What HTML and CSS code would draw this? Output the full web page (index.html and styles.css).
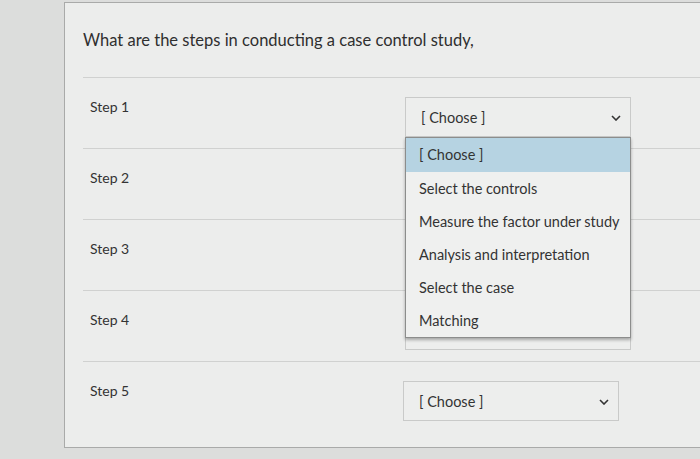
FILE: index.html
```html
<!DOCTYPE html>
<html lang="en">
<head>
  <meta charset="UTF-8">
  <title>Quiz Question</title>
  <link rel="stylesheet" href="styles.css">
</head>
<body>
  <!-- Question card -->
  <div class="question">
    <p class="question-text">What are the steps in conducting a case control study,</p>

    <div class="answers">
      <div class="answer-row">
        <span class="step-label">Step 1</span>
        <div class="select-wrap">
          <div class="select-box">
            <span>[ Choose ]</span>
            <svg class="chevron" viewBox="0 0 10 6" width="10" height="6"><path d="M1 1l4 4 4-4" fill="none" stroke="#333" stroke-width="1.6"/></svg>
          </div>
          <!-- Open dropdown list -->
          <ul class="dropdown">
            <li class="active">[ Choose ]</li>
            <li>Select the controls</li>
            <li>Measure the factor under study</li>
            <li>Analysis and interpretation</li>
            <li>Select the case</li>
            <li>Matching</li>
          </ul>
        </div>
      </div>
      <!-- Steps 2-4: selects sit under the open list -->
      <div class="answer-row">
        <span class="step-label">Step 2</span>
        <div class="select-wrap">
          <div class="select-box"></div>
        </div>
      </div>
      <div class="answer-row">
        <span class="step-label">Step 3</span>
        <div class="select-wrap">
          <div class="select-box"></div>
        </div>
      </div>
      <div class="answer-row">
        <span class="step-label">Step 4</span>
        <div class="select-wrap">
          <div class="select-box"></div>
        </div>
      </div>
      <div class="answer-row last">
        <span class="step-label">Step 5</span>
        <div class="select-wrap">
          <div class="select-box short">
            <span>[ Choose ]</span>
            <svg class="chevron" viewBox="0 0 10 6" width="10" height="6"><path d="M1 1l4 4 4-4" fill="none" stroke="#333" stroke-width="1.6"/></svg>
          </div>
        </div>
      </div>
    </div>
  </div>
</body>
</html>
```

FILE: styles.css
```css
/* Base Styling */
* {
  margin: 0;
  padding: 0;
  box-sizing: border-box;
}

body {
  font-family: Lato, "Open Sans", Arial, sans-serif;
  background-color: #dcdddc;
  color: #333;
  width: 700px;
  height: 459px;
  overflow: hidden;
}

/* Question Card */
.question {
  margin: 2px 0 0 64px;
  width: 660px;
  height: 446px;
  background-color: #ecedec;
  border: 1px solid #a9aaa9;
  padding: 0 0 0 18px;
}

.question-text {
  font-size: 16.5px;
  color: #2f2f2f;
  padding: 27px 0 0 0;
  height: 74px;
}

/* Answer Rows */
.answers {
  display: flex;
  flex-direction: column;
}

.answer-row {
  display: flex;
  border-top: 1px solid #d0d1d0;
  height: 71px;
}

.answer-row.last {
  height: 84px;
}

.step-label {
  width: 322px;
  padding: 20px 0 0 7px;
  font-size: 14px;
  color: #333;
}

.select-wrap {
  position: relative;
  padding-top: 19px;
}

.select-box {
  width: 226px;
  height: 40px;
  border: 1px solid #c9cac9;
  background-color: #edeeed;
  display: flex;
  align-items: center;
  justify-content: space-between;
  padding: 0 9px 0 15px;
  font-size: 14.5px;
  color: #333;
}

.select-box.short {
  width: 216px;
  margin-left: -2px;
}

.chevron {
  margin-top: 2px;
}

/* Dropdown List */
.dropdown {
  position: absolute;
  top: 59px;
  left: 0;
  width: 226px;
  list-style: none;
  background-color: #eff0ef;
  border: 1px solid #8c8d8c;
  box-shadow: 0 2px 3px rgba(0, 0, 0, 0.3);
  z-index: 2;
}

.dropdown li {
  height: 33px;
  line-height: 33px;
  padding-left: 13px;
  font-size: 14.5px;
  color: #333;
}

.dropdown li.active {
  background-color: #b6d3e2;
  height: 34px;
  line-height: 34px;
}
```
